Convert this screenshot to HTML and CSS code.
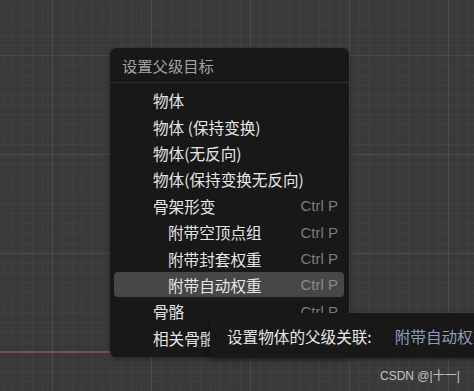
FILE: index.html
```html
<!DOCTYPE html>
<html lang="zh">
<head>
<meta charset="utf-8">
<link rel="stylesheet" href="styles.css">
</head>
<body>
<div class="viewport">
  <div class="axis-x"></div>
  <div class="menu">
    <div class="menu-title">设置父级目标</div>
    <div class="menu-items">
      <div class="item"><span class="label">物体</span></div>
      <div class="item"><span class="label">物体 (保持变换)</span></div>
      <div class="item"><span class="label">物体(无反向)</span></div>
      <div class="item"><span class="label">物体(保持变换无反向)</span></div>
      <div class="item"><span class="label">骨架形变</span><span class="key">Ctrl P</span></div>
      <div class="item sub"><span class="label">附带空顶点组</span><span class="key">Ctrl P</span></div>
      <div class="item sub"><span class="label">附带封套权重</span><span class="key">Ctrl P</span></div>
      <div class="item sub active"><span class="label">附带自动权重</span><span class="key">Ctrl P</span></div>
      <div class="item"><span class="label">骨骼</span><span class="key">Ctrl P</span></div>
      <div class="item"><span class="label">相关骨骼</span><span class="key">Ctrl P</span></div>
    </div>
  </div>
  <div class="tooltip">
    <span class="tip-text">设置物体的父级关联:</span>
    <span class="tip-value">附带自动权重</span>
  </div>
  <div class="watermark">CSDN @|十一|</div>
</div>
</body>
</html>
```
FILE: styles.css
```css
html, body {
  margin: 0;
  padding: 0;
}
body {
  width: 474px;
  height: 391px;
  overflow: hidden;
  font-family: "Noto Sans CJK SC", "Noto Sans", sans-serif;
}
.viewport {
  position: relative;
  width: 474px;
  height: 391px;
  overflow: hidden;
  background-color: #3a3a3a;
  background-image:
    linear-gradient(to right, #4b4b4b 0 1px, transparent 1px),
    linear-gradient(to bottom, #4b4b4b 0 1px, transparent 1px),
    linear-gradient(to right, #414141 0 1px, transparent 1px),
    linear-gradient(to bottom, #414141 0 1px, transparent 1px);
  background-size: 99px 99px, 99px 99px, 9.9px 9.9px, 9.9px 9.9px;
  background-position: 52px 0, 0 55px, 2.5px 0, 0 5.5px;
}
.axis-x {
  position: absolute;
  left: 0;
  top: 351px;
  width: 474px;
  height: 2px;
  background: #7e4c5c;
}
.menu {
  position: absolute;
  left: 110px;
  top: 48px;
  width: 239px;
  height: 309px;
  box-sizing: border-box;
  background: #181818;
  border-radius: 6px;
  box-shadow: 0 2px 6px rgba(0,0,0,0.35);
}
.menu-title {
  height: 35px;
  box-sizing: border-box;
  padding-left: 12px;
  display: flex;
  align-items: center;
  font-size: 15.3px;
  color: #a4a4a4;
  border-bottom: 1px solid #2c2c2c;
}
.menu-items {
  padding-top: 4px;
  display: flex;
  flex-direction: column;
}
.item {
  height: 26.4px;
  margin: 0 5px 0 4px;
  padding: 0 6px 0 39px;
  display: flex;
  align-items: center;
  justify-content: space-between;
  font-size: 15.6px;
  color: #e6e6e6;
  border-radius: 4px;
}
.item.sub {
  padding-left: 54px;
}
.item.active {
  background: #474747;
  height: 25px;
  margin-top: 0.7px;
  margin-bottom: 0.7px;
}
.key {
  font-family: "Liberation Sans", "Noto Sans", sans-serif;
  font-size: 15px;
  color: #7c7c7c;
}
.item.active .key {
  color: #8a8a8a;
}
.tooltip {
  position: absolute;
  left: 210px;
  top: 313px;
  width: 300px;
  height: 45px;
  box-sizing: border-box;
  padding-left: 17px;
  display: flex;
  align-items: center;
  gap: 23px;
  background: #181818;
  border-radius: 6px;
  font-size: 15.6px;
  white-space: nowrap;
  box-shadow: 0 2px 6px rgba(0,0,0,0.35);
}
.tip-text {
  color: #e6e6e6;
}
.tip-value {
  color: #8e9dbb;
}
.watermark {
  position: absolute;
  left: 380px;
  top: 366px;
  font-family: "Liberation Sans", "Noto Sans CJK SC", sans-serif;
  font-size: 12px;
  color: #c4c4c4;
  white-space: nowrap;
}
```
